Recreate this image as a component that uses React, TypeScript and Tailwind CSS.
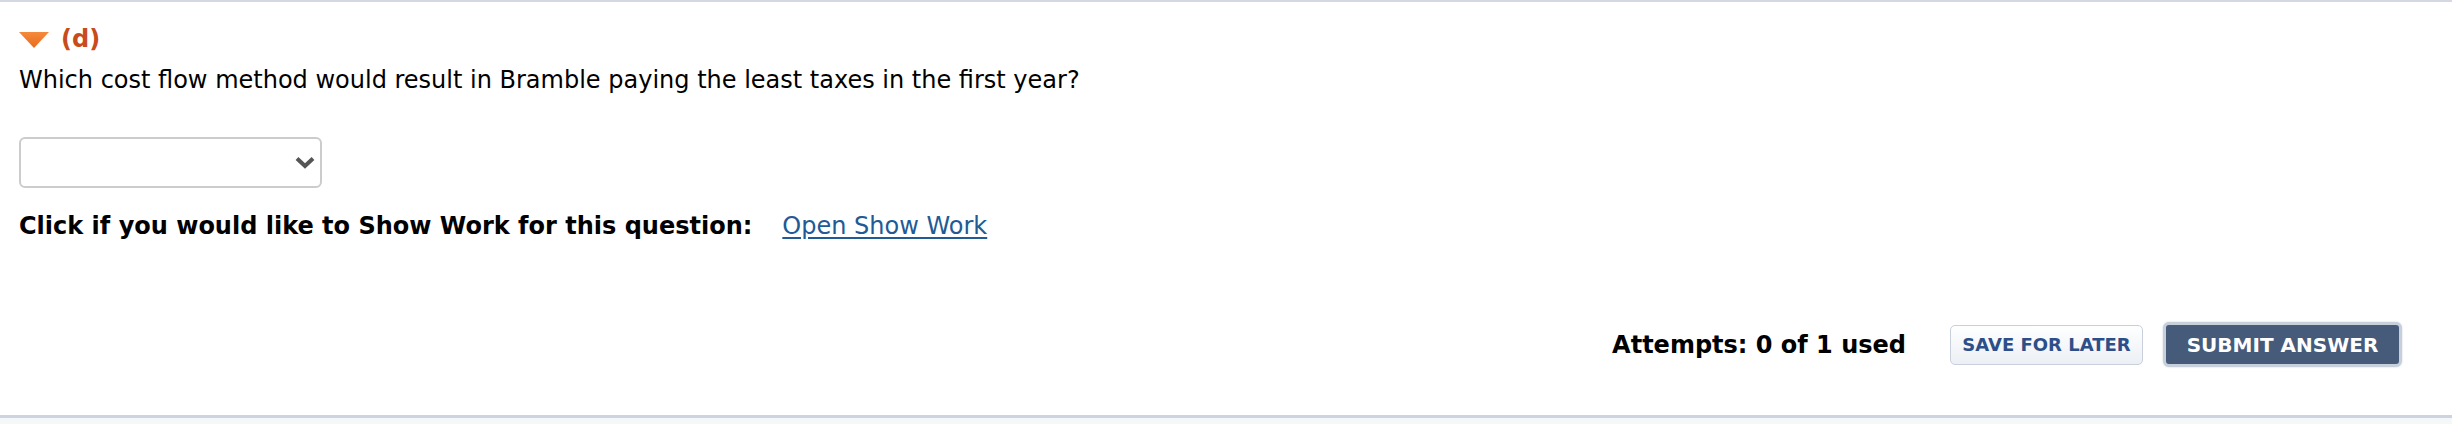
import { useState } from "react";

const font = { fontFamily: '"DejaVu Sans", Verdana, sans-serif' };

const App = () => {
  const [choice, setChoice] = useState("");

  return (
    <div className="w-full h-[424px] bg-white flex flex-col border-t-2 border-[#d3d8e2]" style={font}>
      <div className="flex-1 pl-[19px] pr-[50px]">
        {/* part heading */}
        <div className="mt-[23px] flex items-center h-[28px]">
          <svg width="30" height="17" viewBox="0 0 30 17" className="mr-[12px] mt-[2px]">
            <defs>
              <linearGradient id="tri" x1="0" y1="0" x2="0" y2="1">
                <stop offset="0" stopColor="#f58a3c" />
                <stop offset="1" stopColor="#ea6a1c" />
              </linearGradient>
            </defs>
            <polygon points="0,0 30,0 15,16" fill="url(#tri)" />
          </svg>
          <span className="text-[24px] font-bold text-[#c94a1a] leading-[28px]">(d)</span>
        </div>

        <p className="mt-[13px] text-[24px] leading-[28px] text-black">
          Which cost flow method would result in Bramble paying the least taxes in the first year?
        </p>

        <div className="mt-[43px] relative w-[303px] h-[51px]">
          <select
            value={choice}
            onChange={e => setChoice(e.target.value)}
            className="appearance-none w-full h-full rounded-[6px] border-2 border-[#cccccc] bg-white px-3 text-[22px] outline-none"
            style={font}
          >
            <option value=""></option>
            <option value="fifo">FIFO</option>
            <option value="lifo">LIFO</option>
            <option value="avg">Average-cost</option>
          </select>
          <svg
            width="20"
            height="13"
            viewBox="0 0 20 13"
            className="absolute right-[7px] top-[19px] pointer-events-none"
          >
            <polyline points="2,2.5 10,10 18,2.5" fill="none" stroke="#555555" strokeWidth="4" />
          </svg>
        </div>

        <div className="mt-[24px] flex items-center h-[28px] text-[24px] leading-[28px]">
          <span className="font-bold text-black">Click if you would like to Show Work for this question:</span>
          <a href="#" className="ml-[30px] text-[#215a94] underline underline-offset-[3px]">
            Open Show Work
          </a>
        </div>

        <div className="mt-[82px] flex items-center justify-end">
          <span className="text-[24px] font-bold text-black mr-[44px]">Attempts: 0 of 1 used</span>
          <button
            className="w-[193px] h-[40px] rounded-[5px] border border-[#c9d0dc] bg-gradient-to-b from-white to-[#eceff4] text-[18px] font-bold text-[#2c4f89] mr-[20px]"
            style={font}
          >
            SAVE FOR LATER
          </button>
          <button
            className="w-[239px] h-[45px] rounded-[6px] border-[3px] border-[#c7cfdb] bg-[#465a79] text-[20px] font-bold text-white shadow-[0_0_2px_#c7cfdb]"
            style={font}
          >
            SUBMIT ANSWER
          </button>
        </div>
      </div>
      <div className="h-[9px] border-t-[3px] border-[#cdd4df] bg-[#f6f7f9]" />
    </div>
  );
};

export default App;
